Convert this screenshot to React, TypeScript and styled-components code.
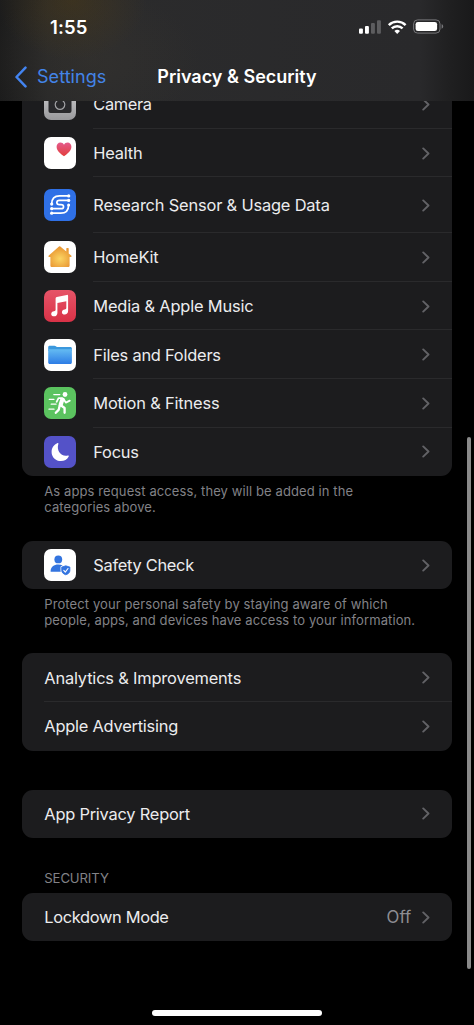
import React from "react";
import styled, { createGlobalStyle } from "styled-components";

const GlobalStyle = createGlobalStyle`
  * { box-sizing: border-box; }
  html, body { margin: 0; background: #000; }
  body { font-family: Inter, "Liberation Sans", sans-serif; color: #ececee; overflow: hidden; }
  svg { display: block; flex: none; }
`;

const Screen = styled.div`
  position: relative;
  width: 474px;
  height: 1025px;
  overflow: hidden;
  background: #000;
  display: flex;
  flex-direction: column;
`;

const Header = styled.header`
  flex: none;
  height: 101px;
  background:
    radial-gradient(ellipse 75px 60px at 72px 0, rgba(92, 66, 12, 0.34), rgba(70, 55, 25, 0)),
    radial-gradient(ellipse 110px 70px at 90px 60px, rgba(60, 56, 48, 0.35), rgba(50, 50, 46, 0)),
    linear-gradient(90deg, #1c1c1c 0, #292929 48px, #2b2b2c 110px, #29292b 420px, #202021 448px, #19191a 474px);
`;

const StatusBar = styled.div`
  height: 53px;
  padding: 19px 30px 0 50px;
  display: flex;
  justify-content: space-between;
  align-items: flex-start;
`;

const Time = styled.span`
  font-size: 18.5px;
  line-height: 17px;
  font-weight: 600;
  letter-spacing: 0.1px;
  color: #fff;
`;

const NavBar = styled.nav`
  height: 48px;
  padding: 0 15px;
  display: grid;
  grid-template-columns: 120px 204px 120px;
  align-items: center;
`;

const Back = styled.a`
  display: flex;
  align-items: center;
  gap: 10px;
  color: #4384e8;
  font-size: 18px;
  line-height: 24px;
  letter-spacing: 0.05px;
`;

const Title = styled.h1`
  margin: 0;
  font-size: 18px;
  line-height: 24px;
  font-weight: 600;
  color: #fff;
  text-align: center;
  white-space: nowrap;
`;

const Content = styled.main`
  flex: 1;
  min-height: 0;
  overflow: hidden;
  padding: 0 22.3px;
`;

const Group = styled.section<{ $top: number }>`
  margin-top: ${(p) => p.$top}px;
  border-radius: 11px;
  background: #1c1c1e;
  overflow: hidden;
`;

const Row = styled.div<{ $height?: number }>`
  height: ${(p) => p.$height ?? 48.7}px;
  padding-left: 22px;
  display: flex;
  align-items: center;
`;

const RowBody = styled.div<{ $line?: boolean }>`
  flex: 1;
  height: 100%;
  padding-top: ${(p) => (p.$line ? 1.2 : 0)}px;
  padding-right: 22px;
  display: flex;
  align-items: center;
  justify-content: space-between;
  border-bottom: ${(p) => (p.$line ? "1px solid #2a2a2c" : "none")};
`;

const Label = styled.span<{ $spacing?: number }>`
  font-size: 16.4px;
  line-height: 22px;
  letter-spacing: ${(p) => p.$spacing ?? -0.17}px;
  white-space: nowrap;
`;

const Trailing = styled.span`
  display: flex;
  align-items: center;
  gap: 10.5px;
  font-size: 16.8px;
  color: #8e8e93;
`;

const IconBox = styled.span`
  width: 32px;
  height: 32px;
  margin-right: 17px;
  flex: none;
`;

const Note = styled.p<{ $top: number }>`
  margin: ${(p) => p.$top}px 0 0 22px;
  height: 32px;
  font-size: 13px;
  line-height: 16px;
  letter-spacing: 0.1px;
  color: #828287;
  white-space: nowrap;
`;

const SectionTitle = styled.h2`
  margin: 31.8px 0 0 22px;
  height: 22.7px;
  font-size: 13.2px;
  line-height: 17px;
  font-weight: 400;
  letter-spacing: -0.15px;
  color: #828287;
`;

const ScrollThumb = styled.div`
  position: absolute;
  left: 467px;
  top: 437px;
  width: 4px;
  height: 532px;
  border-radius: 2px;
  background: #8a8a8a;
`;

const HomeIndicator = styled.div`
  position: absolute;
  left: 152px;
  top: 1010px;
  width: 170px;
  height: 6px;
  border-radius: 3px;
  background: #fff;
`;

const Chevron = () => (
  <svg width="8" height="13" viewBox="0 0 8 13" fill="none" stroke="#626266" strokeWidth="1.9" strokeLinecap="round" strokeLinejoin="round">
    <path d="M1.2 1.4 6.5 6.5 1.2 11.6" />
  </svg>
);

const Tile = ({ fill, children }: { fill: string; children: React.ReactNode }) => (
  <svg width="32" height="32" viewBox="0 0 32 32">
    <rect width="32" height="32" rx="7" fill={fill} />
    {children}
  </svg>
);

const CameraIcon = () => (
  <Tile fill="url(#camBody)">
    <defs>
      <linearGradient id="camBody" x2="0" y2="1">
        <stop offset="0" stopColor="#d0d0d2" />
        <stop offset="1" stopColor="#98989b" />
      </linearGradient>
    </defs>
    <rect x="4.5" y="7" width="23" height="18" rx="2" fill="#29292c" />
    <circle cx="16" cy="16.6" r="4.8" fill="none" stroke="#a0a0a3" strokeWidth="1.2" />
    <circle cx="22.8" cy="11.5" r="0.8" fill="#c5a33b" />
  </Tile>
);

const HealthIcon = () => (
  <Tile fill="#fff">
    <defs>
      <linearGradient id="heart" x2="0" y2="1">
        <stop offset="0" stopColor="#e45a8b" />
        <stop offset="1" stopColor="#e23e3c" />
      </linearGradient>
    </defs>
    <path d="M20 19.2C16.2 16.5 12.6 13.5 12.6 9.7c0-2.5 1.7-4.2 3.8-4.2 1.6 0 2.9.9 3.6 2.2.7-1.3 2-2.2 3.6-2.2 2.1 0 3.8 1.7 3.8 4.2 0 3.8-3.6 6.8-7.4 9.5Z" fill="url(#heart)" />
  </Tile>
);

const ResearchIcon = () => (
  <Tile fill="#2f70e6">
    <g fill="none" stroke="#fff" strokeWidth="1.7" strokeLinecap="round">
      <path d="M24.6 6.9H15.6C10.8 6.9 7.7 9.6 7.7 15" />
      <path d="M24.6 11.4H15.4c-3.4 0-3.4 4.2 0 4.2h1.6c3.4 0 3.4 4.1 0 4.1H7.7" />
      <path d="M7.7 24.2h9c4.8 0 7.9-2.8 7.9-8.2" />
    </g>
    <g fill="#fff">
      <circle cx="24.7" cy="6.9" r="1.6" />
      <circle cx="24.7" cy="11.4" r="1.6" />
      <circle cx="24.6" cy="16" r="1.5" />
      <circle cx="7.7" cy="15.1" r="1.6" />
      <circle cx="7.7" cy="19.7" r="1.6" />
      <circle cx="7.7" cy="24.2" r="1.6" />
    </g>
  </Tile>
);

const HomeKitIcon = () => (
  <Tile fill="#fff">
    <defs>
      <radialGradient id="house" cy="0.6" r="0.55">
        <stop offset="0" stopColor="#fbd563" />
        <stop offset="0.5" stopColor="#f2b64b" />
        <stop offset="1" stopColor="#e99632" />
      </radialGradient>
    </defs>
    <path d="M16 5.2 22.3 10.4V7.6q0-.6.6-.6h1.2q.6 0 .6.6v4.8l2.5 2.1c.8.7.3 1.6-.6 1.6h-1v8.4c0 1-.7 1.6-1.7 1.6H8.1c-1 0-1.7-.6-1.7-1.6v-8.4h-1c-.9 0-1.4-.9-.6-1.6L15 5.4q.5-.4 1-.2Z" fill="url(#house)" />
  </Tile>
);

const MusicIcon = () => (
  <Tile fill="url(#music)">
    <defs>
      <linearGradient id="music" x2="0" y2="1">
        <stop offset="0" stopColor="#e65468" />
        <stop offset="1" stopColor="#d93247" />
      </linearGradient>
    </defs>
    <path d="M11.6 8.5c0-.8.4-1.3 1.2-1.5l10-2.1c.8-.2 1.3.2 1.3 1v15.2c0 2-1.6 3.4-3.4 3.4-1.6 0-2.8-.9-2.8-2.3 0-1.6 1.3-2.4 2.8-2.7 1.1-.3 1.6-.5 1.6-1.4v-6.9l-8.9 1.9v9.8c0 2-1.5 3.4-3.4 3.4-1.6 0-2.8-.9-2.8-2.3 0-1.6 1.2-2.4 2.8-2.7 1.1-.3 1.6-.6 1.6-1.5Z" fill="#fff" />
  </Tile>
);

const FilesIcon = () => (
  <Tile fill="#fff">
    <defs>
      <linearGradient id="folder" x2="0" y2="1">
        <stop offset="0" stopColor="#64bbf2" />
        <stop offset="1" stopColor="#2d7ce5" />
      </linearGradient>
    </defs>
    <path d="M4.2 8.3c0-1 .6-1.5 1.5-1.5h4.7c.8 0 1.2.3 1.8.8.5.4.8.5 1.5.5h12.6c1 0 1.6.6 1.6 1.5V12H4.2Z" fill="#3a98dd" />
    <path d="M4.2 10.3h23.7v13c0 1.1-.6 1.8-1.8 1.8H6c-1.2 0-1.8-.7-1.8-1.8Z" fill="url(#folder)" />
  </Tile>
);

const MotionIcon = () => (
  <Tile fill="#5bc35f">
    <circle cx="21" cy="7.5" r="2.4" fill="#fff" />
    <g fill="none" stroke="#fff" strokeLinecap="round" strokeLinejoin="round">
      <path d="M18.3 12.6 16.7 17.6" strokeWidth="4.2" />
      <path d="M18 11.2 14.5 11.2 12.6 14.8M19.6 12l2.2 3.6 4-2" strokeWidth="1.8" />
      <path d="M16.8 18.2 20.6 21v4.8" strokeWidth="2.3" />
      <path d="M15.7 18.6 14.8 22.6 11.8 25.8" strokeWidth="2.3" />
      <path d="M9.8 7.6h6M5.3 12.4h4.6M7.2 17.2h4.8M5 22.2h5" strokeWidth="1.3" />
    </g>
  </Tile>
);

const FocusIcon = () => (
  <Tile fill="#5452c8">
    <path d="M13.6 7.1c.5-.3 1 .1.8.7-2.2 6.7 2.5 13.2 9.5 11.7.7-.1 1.1.3.8.9-1.4 2.9-4.5 4.7-7.8 4.7-5.2 0-9.3-3.9-9.3-9.1 0-4 2.3-7.4 6-8.9Z" fill="#fff" />
  </Tile>
);

const SafetyIcon = () => (
  <Tile fill="#fff">
    <circle cx="14.3" cy="10.4" r="3.9" fill="#3374df" />
    <path d="M6.6 22.4c0-4.1 3.3-6.8 7.7-6.8 1.7 0 3.1.4 4.2 1-.8 1.1-.9 2.8-.8 4.1.1.8.3 1.5.6 2H7c-.3 0-.4-.1-.4-.3Z" fill="#3374df" />
    <path d="m21.8 16.8 4.1 1.3v3.3c0 2.1-1.7 3.6-4.1 4.4-2.4-.8-4.1-2.3-4.1-4.4v-3.3Z" fill="#3374df" stroke="#fff" strokeWidth="2.4" strokeLinejoin="round" />
    <path d="m21.8 16.8 4.1 1.3v3.3c0 2.1-1.7 3.6-4.1 4.4-2.4-.8-4.1-2.3-4.1-4.4v-3.3Z" fill="#3374df" stroke="#3374df" strokeWidth="0.8" strokeLinejoin="round" />
    <path d="m19.8 21.4 1.5 1.7 2.7-3.6" fill="none" stroke="#fff" strokeWidth="1.1" strokeLinecap="round" strokeLinejoin="round" />
  </Tile>
);

const StatusIcons = () => (
  <svg width="86" height="17" viewBox="0 0 86 17">
    <g fill="#fff">
      <rect x="1" y="9.4" width="3.9" height="5.4" rx="1" />
      <rect x="7" y="7" width="3.9" height="7.8" rx="1" />
      <rect x="13" y="4.1" width="3.9" height="10.7" rx="1" fill="#5d5d5f" />
      <rect x="19" y="1.2" width="3.9" height="13.6" rx="1" fill="#5d5d5f" />
    </g>
    <g fill="none" stroke="#fff" strokeWidth="2.4">
      <path d="M30.8 6.1a12 12 0 0 1 16.8 0" />
      <path d="M33.8 9.4a7.7 7.7 0 0 1 10.8 0" />
    </g>
    <path d="M36.4 12.1a4.1 4.1 0 0 1 5.6 0L39.2 15Z" fill="#fff" />
    <rect x="55.6" y="0.9" width="26.4" height="13.2" rx="4" fill="none" stroke="#77777a" strokeWidth="1" />
    <rect x="57.6" y="2.9" width="21.5" height="9.2" rx="2.4" fill="#fff" />
    <path d="M83.6 5.3c1.1.4 1.6 1.1 1.6 2.2s-.5 1.8-1.6 2.2Z" fill="#77777a" />
  </svg>
);

type Item = { label: string; icon?: React.ReactNode; height?: number; spacing?: number; value?: string };

const categories: Item[] = [
  { label: "Camera", icon: <CameraIcon />, spacing: -0.35 },
  { label: "Health", icon: <HealthIcon />, spacing: -0.2 },
  { label: "Research Sensor & Usage Data", icon: <ResearchIcon />, height: 55.6 },
  { label: "HomeKit", icon: <HomeKitIcon />, spacing: -0.2 },
  { label: "Media & Apple Music", icon: <MusicIcon /> },
  { label: "Files and Folders", icon: <FilesIcon />, spacing: -0.22 },
  { label: "Motion & Fitness", icon: <MotionIcon /> },
  { label: "Focus", icon: <FocusIcon />, spacing: -0.25 },
];

const List = ({ items, top }: { items: Item[]; top: number }) => (
  <Group $top={top}>
    {items.map((item, i) => (
      <Row key={item.label} $height={item.height}>
        {item.icon && <IconBox>{item.icon}</IconBox>}
        <RowBody $line={i < items.length - 1}>
          <Label $spacing={item.spacing}>{item.label}</Label>
          <Trailing>
            {item.value}
            <Chevron />
          </Trailing>
        </RowBody>
      </Row>
    ))}
  </Group>
);

export default function App() {
  return (
    <Screen>
      <GlobalStyle />
      <Header>
        <StatusBar>
          <Time>1:55</Time>
          <StatusIcons />
        </StatusBar>
        <NavBar>
          <Back>
            <svg width="12" height="22" viewBox="0 0 12 22" fill="none" stroke="#4384f0" strokeWidth="2.5" strokeLinecap="round" strokeLinejoin="round">
              <path d="M10.5 1.6 1.5 11l9 9.4" />
            </svg>
            Settings
          </Back>
          <Title>Privacy &amp; Security</Title>
        </NavBar>
      </Header>
      <Content>
        <List top={-21.1} items={categories} />
        <Note $top={6.8}>
          As apps request access, they will be added in the
          <br />
          categories above.
        </Note>
        <List top={25.6} items={[{ label: "Safety Check", icon: <SafetyIcon />, spacing: -0.28 }]} />
        <Note $top={6.3}>
          Protect your personal safety by staying aware of which
          <br />
          people, apps, and devices have access to your information.
        </Note>
        <List top={25.5} items={[{ label: "Analytics & Improvements" }, { label: "Apple Advertising", spacing: -0.22 }]} />
        <List top={39} items={[{ label: "App Privacy Report", spacing: -0.22 }]} />
        <SectionTitle>SECURITY</SectionTitle>
        <List top={0} items={[{ label: "Lockdown Mode", value: "Off", spacing: -0.33 }]} />
      </Content>
      <ScrollThumb />
      <HomeIndicator />
    </Screen>
  );
}
